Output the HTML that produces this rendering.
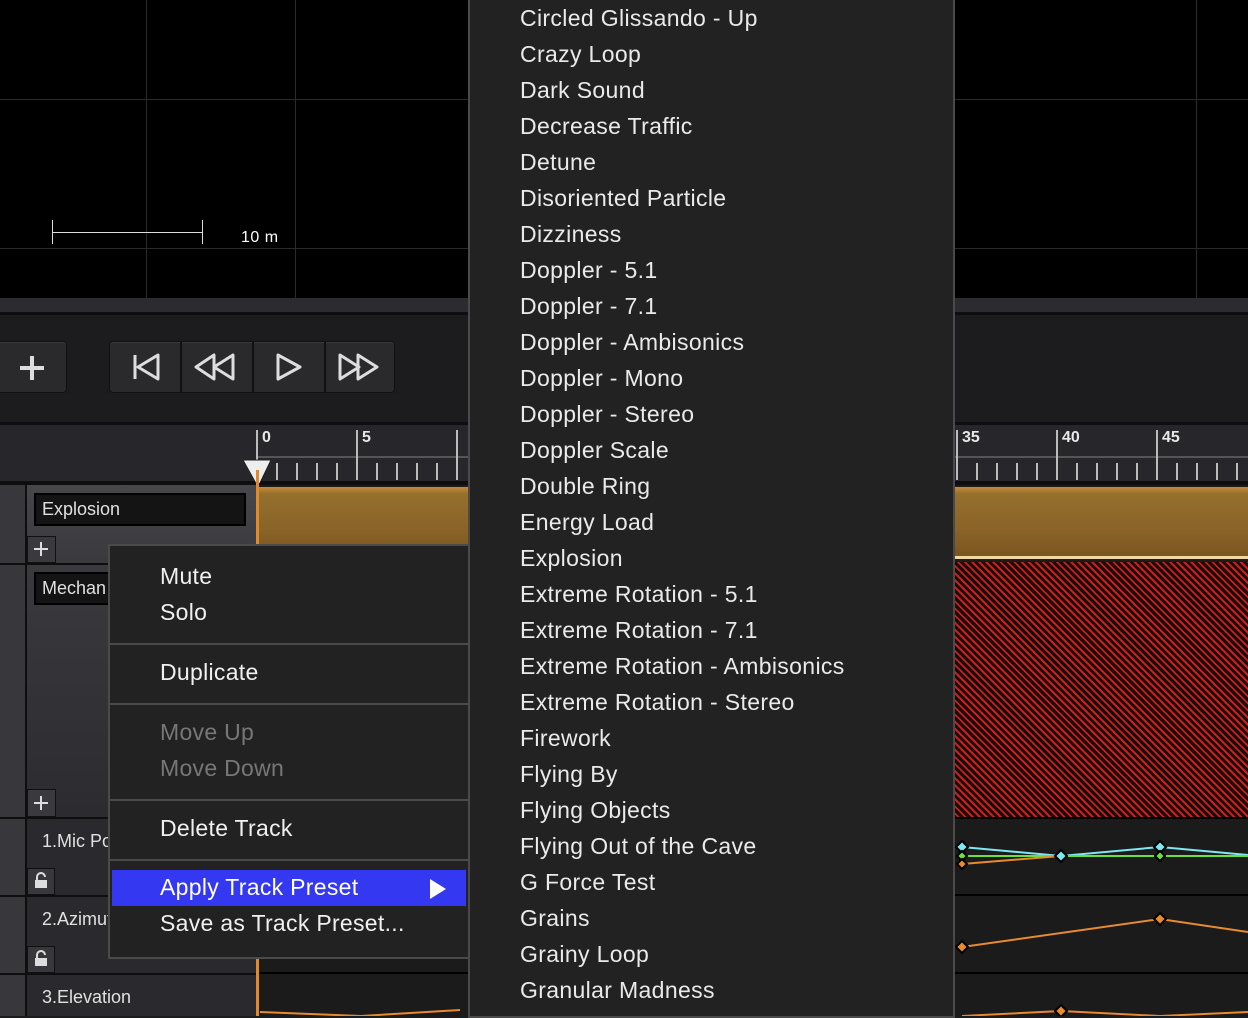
<!DOCTYPE html>
<html><head><meta charset="utf-8"><style>
*{margin:0;padding:0;box-sizing:border-box}
body{width:1248px;height:1016px;overflow:hidden;background:#1c1c1e;font-family:"Liberation Sans",sans-serif;position:relative}
.a{position:absolute}
.mi{position:absolute;left:50px;font-size:23px;color:#f0f0f0;line-height:36px;white-space:nowrap;letter-spacing:.3px;margin-top:-2px}
.sep{position:absolute;left:0;right:0;height:2px;background:#4a4a4a}
.si{position:absolute;left:50px;font-size:23px;color:#eaeaea;line-height:36px;white-space:nowrap;letter-spacing:.35px;margin-top:-2px}
.tn{position:absolute;font-size:18px;color:#e0e0e0}
.hatch{background:repeating-linear-gradient(45deg,#c8201c 0 2px,#1a0a0a 2px 5px)}
</style></head><body>
<div class="a" style="left:0;top:0;width:1248px;height:298px;background:#000"></div>
<div class="a" style="left:146px;top:0;width:1px;height:298px;background:#2a2a2a"></div>
<div class="a" style="left:295px;top:0;width:1px;height:298px;background:#2a2a2a"></div>
<div class="a" style="left:1196px;top:0;width:1px;height:298px;background:#2a2a2a"></div>
<div class="a" style="left:0;top:99px;width:1248px;height:1px;background:#2a2a2a"></div>
<div class="a" style="left:0;top:248px;width:1248px;height:1px;background:#2a2a2a"></div>
<div class="a" style="left:52px;top:232px;width:151px;height:1px;background:#ddd"></div>
<div class="a" style="left:52px;top:220px;width:1px;height:24px;background:#ddd"></div>
<div class="a" style="left:202px;top:220px;width:1px;height:24px;background:#ddd"></div>
<div class="a" style="left:241px;top:229px;font-size:16px;color:#fff;letter-spacing:.5px">10 m</div>
<div class="a" style="left:0;top:298px;width:1248px;height:14px;background:#2c2c30"></div>
<div class="a" style="left:0;top:312px;width:1248px;height:3px;background:#0e0e0e"></div>
<div class="a" style="left:-10px;top:341px;width:77px;height:52px;background:#2a2a2d;border:1px solid #111;border-radius:4px;box-shadow:inset 0 1px 0 #3a3a3d"></div>
<svg class="a" style="left:18px;top:354px" width="28" height="28"><path d="M14 2V26M2 14H26" stroke="#ddd" stroke-width="4"/></svg>
<div class="a" style="left:109px;top:341px;width:286px;height:52px;background:#2a2a2d;border:1px solid #111;border-radius:4px;box-shadow:inset 0 1px 0 #3a3a3d"></div>
<div class="a" style="left:180px;top:342px;width:2px;height:50px;background:#111"></div>
<div class="a" style="left:252px;top:342px;width:2px;height:50px;background:#111"></div>
<div class="a" style="left:324px;top:342px;width:2px;height:50px;background:#111"></div>
<svg class="a" style="left:109px;top:341px" width="286" height="52" fill="none" stroke="#ddd" stroke-width="3" stroke-linejoin="round">
<path d="M26 14V38M49 14L29 26L49 38Z"/>
<path d="M87 26L105 14V38Z M105 26L124 14V38Z"/>
<path d="M169 14L191 26L169 38Z"/>
<path d="M231 14L250 26L231 38Z M249 14L268 26L249 38Z"/>
</svg>
<div class="a" style="left:0;top:422px;width:1248px;height:3px;background:#0e0e0e"></div>
<div class="a" style="left:0;top:425px;width:1248px;height:58px;background:#27272b"></div>
<div class="a" style="left:257px;top:456px;width:991px;height:2px;background:#555"></div>
<div class="a" style="left:0;top:481px;width:1248px;height:4px;background:#0e0e0e"></div>
<svg class="a" style="left:0;top:425px" width="1248" height="58">
<g stroke="#bbb" stroke-width="2">
<path d="M257 5V55M357 5V55M457 5V55M957 5V55M1057 5V55M1157 5V55"/>
<path d="M277 38V55M297 38V55M317 38V55M337 38V55M377 38V55M397 38V55M417 38V55M437 38V55M977 38V55M997 38V55M1017 38V55M1037 38V55M1077 38V55M1097 38V55M1117 38V55M1137 38V55M1177 38V55M1197 38V55M1217 38V55M1237 38V55"/>
</g>
<g fill="#e8e8e8" font-size="16" font-family="Liberation Sans" font-weight="bold"><text x="262" y="17">0</text><text x="362" y="17">5</text><text x="962" y="17">35</text><text x="1062" y="17">40</text><text x="1162" y="17">45</text></g>
<path d="M243 35H271L258 62Z" fill="#eee" stroke="#222"/>
</svg>
<div class="a" style="left:0;top:485px;width:25px;height:531px;background:#38383c"></div>
<div class="a" style="left:25px;top:485px;width:2px;height:531px;background:#0e0e0e"></div>
<div class="a" style="left:27px;top:485px;width:230px;height:78px;background:linear-gradient(#47474b,#3a3a3e)"></div>
<div class="a" style="left:34px;top:493px;width:212px;height:33px;background:#141414;border:2px solid #000"></div>
<div class="tn" style="left:42px;top:499px">Explosion</div>
<div class="a" style="left:27px;top:536px;width:29px;height:27px;background:#3a3a3e;border:1px solid #111"></div>
<svg class="a" style="left:33px;top:541px" width="16" height="16"><path d="M8 1V15M1 8H15" stroke="#ddd" stroke-width="2"/></svg>
<div class="a" style="left:0;top:563px;width:257px;height:2px;background:#0e0e0e"></div>
<div class="a" style="left:27px;top:565px;width:230px;height:252px;background:linear-gradient(#3a3a3e,#2c2c30)"></div>
<div class="a" style="left:34px;top:572px;width:100px;height:33px;background:#141414;border:2px solid #000"></div>
<div class="tn" style="left:42px;top:578px">Mechan</div>
<div class="a" style="left:27px;top:789px;width:29px;height:28px;background:#3a3a3e;border:1px solid #111"></div>
<svg class="a" style="left:33px;top:795px" width="16" height="16"><path d="M8 1V15M1 8H15" stroke="#ddd" stroke-width="2"/></svg>
<div class="a" style="left:0;top:817px;width:257px;height:2px;background:#0e0e0e"></div>
<div class="a" style="left:27px;top:819px;width:230px;height:76px;background:#2a2a2e"></div>
<div class="tn" style="left:42px;top:831px">1.Mic Po</div>
<div class="a" style="left:27px;top:868px;width:28px;height:27px;background:#38383c;border:1px solid #111"></div>
<div class="a" style="left:0;top:895px;width:257px;height:2px;background:#0e0e0e"></div>
<div class="a" style="left:27px;top:897px;width:230px;height:76px;background:#2a2a2e"></div>
<div class="tn" style="left:42px;top:909px">2.Azimuth</div>
<div class="a" style="left:27px;top:946px;width:28px;height:27px;background:#38383c;border:1px solid #111"></div>
<svg class="a" style="left:33px;top:872px" width="16" height="18"><path d="M4 8V5a4 4 0 0 1 8 0" stroke="#ddd" stroke-width="2" fill="none"/><rect x="2" y="8" width="12" height="8" fill="#ddd"/></svg>
<svg class="a" style="left:33px;top:950px" width="16" height="18"><path d="M4 8V5a4 4 0 0 1 8 0" stroke="#ddd" stroke-width="2" fill="none"/><rect x="2" y="8" width="12" height="8" fill="#ddd"/></svg>
<div class="a" style="left:0;top:973px;width:257px;height:2px;background:#0e0e0e"></div>
<div class="a" style="left:27px;top:975px;width:230px;height:41px;background:#2a2a2e"></div>
<div class="tn" style="left:42px;top:987px">3.Elevation</div>
<div class="a" style="left:257px;top:485px;width:991px;height:531px;background:#1b1b1b"></div>
<div class="a" style="left:257px;top:487px;width:991px;height:72px;background:linear-gradient(#c88a34 0,#94702e 10%,#8a6428 60%,#7a5620);border-bottom:3px solid #f0d8a0"></div>
<div class="a hatch" style="left:257px;top:562px;width:991px;height:255px"></div>
<div class="a" style="left:257px;top:817px;width:991px;height:2px;background:#000"></div>
<div class="a" style="left:257px;top:894px;width:991px;height:2px;background:#000"></div>
<div class="a" style="left:257px;top:972px;width:991px;height:2px;background:#000"></div>
<div class="a" style="left:256px;top:470px;width:3px;height:546px;background:#e08a2c"></div>
<svg class="a" style="left:940px;top:818px" width="308" height="198">
<polyline points="22,29 121,38 220,29 308,37" stroke="#7ee8f0" stroke-width="2" fill="none"/>
<polyline points="22,38 308,38" stroke="#6ee03a" stroke-width="2" fill="none"/>
<polyline points="22,46 121,38" stroke="#e88a30" stroke-width="2" fill="none"/>
<polyline points="22,129 220,101 308,114" stroke="#e88a30" stroke-width="2" fill="none"/>
<polyline points="22,198 121,193 220,198 308,194" stroke="#e88a30" stroke-width="2" fill="none"/>
<g stroke="#000" stroke-width="2">
<path d="M22 23l6 6-6 6-6-6z M121 32l6 6-6 6-6-6z M220 23l6 6-6 6-6-6z" fill="#7ee8f0"/>
<path d="M22 33l5 5-5 5-5-5z M220 33l5 5-5 5-5-5z" fill="#6ee03a"/>
<path d="M22 41l5 5-5 5-5-5z M22 123l6 6-6 6-6-6z M220 95l6 6-6 6-6-6z M121 187l6 6-6 6-6-6z" fill="#e88a30"/>
</g>
</svg>
<svg class="a" style="left:257px;top:990px" width="212" height="26"><polyline points="3,22 104,26 203,20" stroke="#e88a30" stroke-width="2" fill="none"/></svg>
<div class="a" style="left:108px;top:544px;width:362px;height:415px;background:#222;border:2px solid #4a4a4a;border-right:none">
<div class="mi" style="top:14px">Mute</div>
<div class="mi" style="top:50px">Solo</div>
<div class="sep" style="top:97px"></div>
<div class="mi" style="top:110px">Duplicate</div>
<div class="sep" style="top:157px"></div>
<div class="mi" style="top:170px;color:#777">Move Up</div>
<div class="mi" style="top:206px;color:#777">Move Down</div>
<div class="sep" style="top:253px"></div>
<div class="mi" style="top:266px">Delete Track</div>
<div class="sep" style="top:313px"></div>
<div class="a" style="left:2px;top:324px;width:354px;height:36px;background:#3438f0"></div>
<div class="mi" style="top:325px;color:#fff">Apply Track Preset</div>
<svg class="a" style="left:320px;top:333px" width="16" height="20"><path d="M0 0L16 10L0 20Z" fill="#fff"/></svg>
<div class="mi" style="top:361px">Save as Track Preset...</div>
</div>
<div class="a" style="left:468px;top:-2px;width:487px;height:1020px;background:#222;border:2px solid #4a4a4a">
<div class="si" style="top:2px">Circled Glissando - Up</div>
<div class="si" style="top:38px">Crazy Loop</div>
<div class="si" style="top:74px">Dark Sound</div>
<div class="si" style="top:110px">Decrease Traffic</div>
<div class="si" style="top:146px">Detune</div>
<div class="si" style="top:182px">Disoriented Particle</div>
<div class="si" style="top:218px">Dizziness</div>
<div class="si" style="top:254px">Doppler - 5.1</div>
<div class="si" style="top:290px">Doppler - 7.1</div>
<div class="si" style="top:326px">Doppler - Ambisonics</div>
<div class="si" style="top:362px">Doppler - Mono</div>
<div class="si" style="top:398px">Doppler - Stereo</div>
<div class="si" style="top:434px">Doppler Scale</div>
<div class="si" style="top:470px">Double Ring</div>
<div class="si" style="top:506px">Energy Load</div>
<div class="si" style="top:542px">Explosion</div>
<div class="si" style="top:578px">Extreme Rotation - 5.1</div>
<div class="si" style="top:614px">Extreme Rotation - 7.1</div>
<div class="si" style="top:650px">Extreme Rotation - Ambisonics</div>
<div class="si" style="top:686px">Extreme Rotation - Stereo</div>
<div class="si" style="top:722px">Firework</div>
<div class="si" style="top:758px">Flying By</div>
<div class="si" style="top:794px">Flying Objects</div>
<div class="si" style="top:830px">Flying Out of the Cave</div>
<div class="si" style="top:866px">G Force Test</div>
<div class="si" style="top:902px">Grains</div>
<div class="si" style="top:938px">Grainy Loop</div>
<div class="si" style="top:974px">Granular Madness</div>
</div>
</body></html>
